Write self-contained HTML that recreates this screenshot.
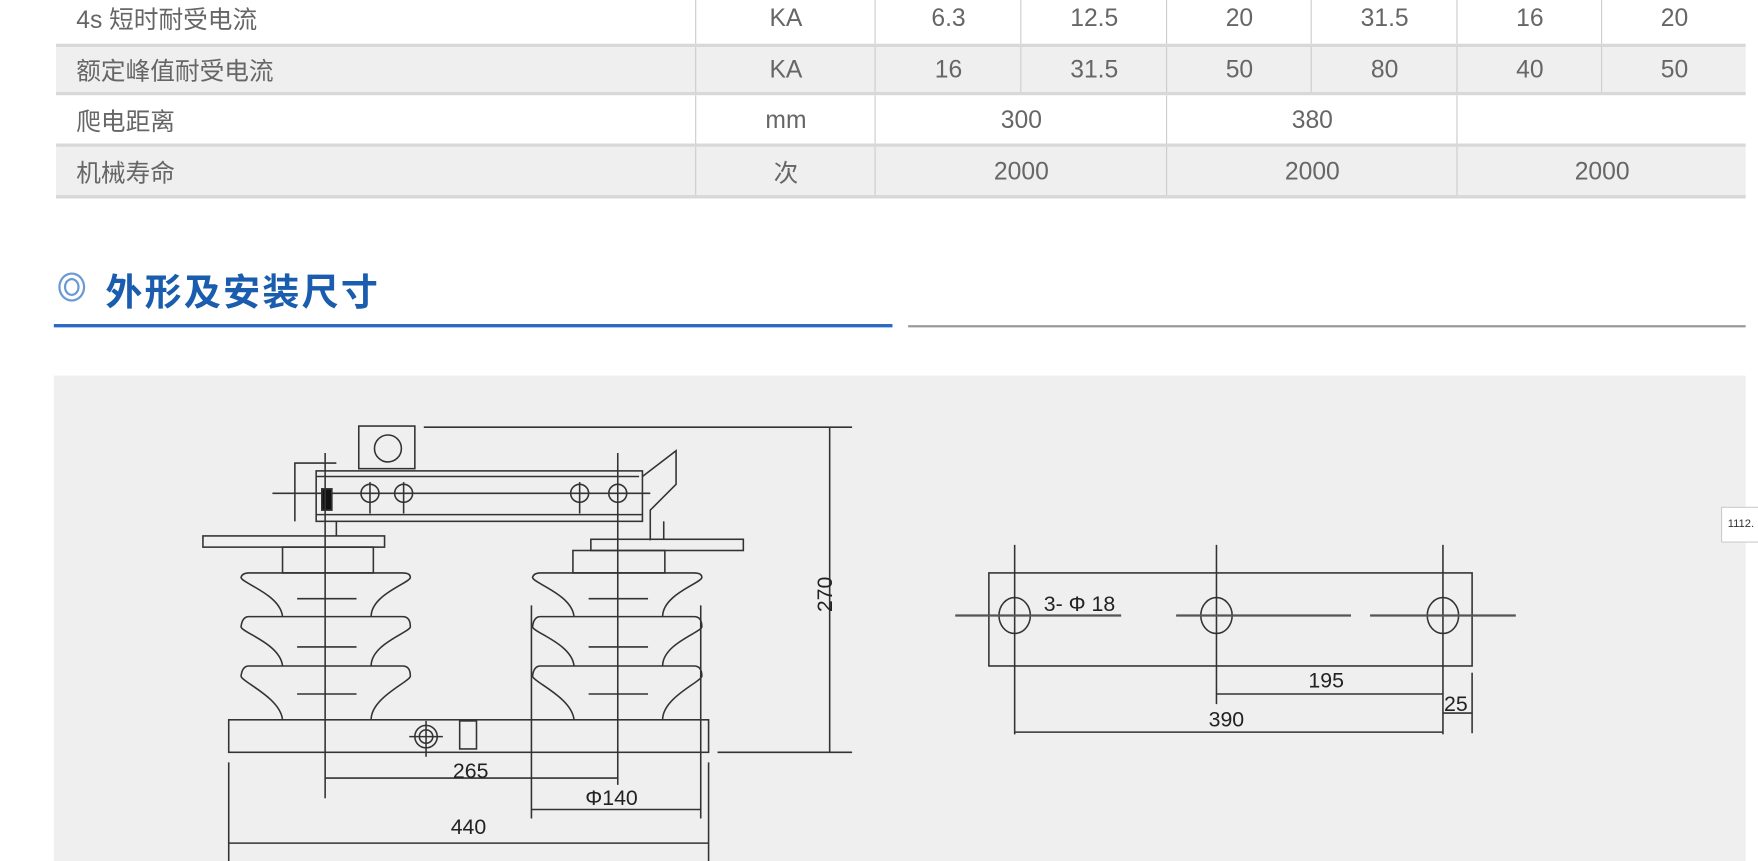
<!DOCTYPE html>
<html><head><meta charset="utf-8"><style>
html,body{margin:0;padding:0;background:#fff;overflow:hidden;width:1758px;height:861px}
#w{position:absolute;left:0;top:0;width:1568px;height:768px;transform:scale(1.12117);transform-origin:0 0;font-family:"Liberation Sans","Noto Sans CJK SC",sans-serif}
.row{position:absolute;left:50px;width:1507px;border-bottom:3px solid #d8d8d8}
.c{position:absolute;top:0;height:100%;border-left:1px solid #ccc;text-align:center;color:#666;font-size:22px;display:flex;align-items:center;justify-content:center}
.c.f{border-left:none;justify-content:flex-start;padding-left:18px;box-sizing:border-box}
</style></head><body><div id="w">
<div class="row" style="top:-8px;height:47px;background:#fff">
<div class="c f" style="left:0;width:570px">4s 短时耐受电流</div>
<div class="c" style="left:570px;width:160px">KA</div><div class="c" style="left:730px;width:130px">6.3</div><div class="c" style="left:860px;width:130px">12.5</div><div class="c" style="left:990px;width:129px">20</div><div class="c" style="left:1119px;width:130px">31.5</div><div class="c" style="left:1249px;width:129px">16</div><div class="c" style="left:1378px;width:129px">20</div></div>
<div class="row" style="top:42px;height:40px;background:#efefef">
<div class="c f" style="left:0;width:570px">额定峰值耐受电流</div>
<div class="c" style="left:570px;width:160px">KA</div><div class="c" style="left:730px;width:130px">16</div><div class="c" style="left:860px;width:130px">31.5</div><div class="c" style="left:990px;width:129px">50</div><div class="c" style="left:1119px;width:130px">80</div><div class="c" style="left:1249px;width:129px">40</div><div class="c" style="left:1378px;width:129px">50</div></div>
<div class="row" style="top:85px;height:43px;background:#fff">
<div class="c f" style="left:0;width:570px">爬电距离</div>
<div class="c" style="left:570px;width:160px">mm</div><div class="c" style="left:730px;width:260px">300</div><div class="c" style="left:990px;width:259px">380</div><div class="c" style="left:1249px;width:258px"></div></div>
<div class="row" style="top:131px;height:43px;background:#efefef">
<div class="c f" style="left:0;width:570px">机械寿命</div>
<div class="c" style="left:570px;width:160px">次</div><div class="c" style="left:730px;width:260px">2000</div><div class="c" style="left:990px;width:259px">2000</div><div class="c" style="left:1249px;width:258px">2000</div></div>

<div style="position:absolute;left:52px;top:243px;width:24px;height:26px;border:2px solid #6a9ad6;border-radius:50%;box-sizing:border-box"></div>
<div style="position:absolute;left:57px;top:248px;width:14px;height:16px;border:2px solid #6a9ad6;border-radius:50%;box-sizing:border-box"></div>
<div style="position:absolute;left:94px;top:234px;font-size:33px;font-weight:bold;color:#1a5cad;letter-spacing:2px">外形及安装尺寸</div>
<div style="position:absolute;left:48px;top:289px;width:748px;height:3px;background:#2a6ac0"></div>
<div style="position:absolute;left:810px;top:290px;width:747px;height:2px;background:#999"></div>

<div style="position:absolute;left:48px;top:335px;width:1509px;height:433px;background:#efefef"></div>
<div style="position:absolute;left:1535px;top:452px;width:40px;height:30px;background:#fff;border:1px solid #ccc;font-size:10px;line-height:30px;padding-left:5px;color:#333">1112.</div>

<svg style="position:absolute;left:0;top:0" width="1568" height="768" viewBox="0 0 1568 768" fill="none" stroke="#333" stroke-width="1.4" font-family="Liberation Sans, sans-serif">
<rect x="320" y="380" width="50" height="38"/><circle cx="346" cy="400" r="12"/>
<line x1="378" y1="381" x2="760" y2="381"/><line x1="740" y1="381" x2="740" y2="671"/><line x1="640" y1="671" x2="760" y2="671"/>
<rect x="282" y="420" width="291" height="45"/><line x1="282" y1="425" x2="570" y2="425"/><line x1="282" y1="459" x2="573" y2="459"/>
<polyline points="263,465 263,413 300,413"/>
<line x1="243" y1="440" x2="580" y2="440"/>
<rect x="287" y="436" width="9" height="19" fill="#111"/>
<circle cx="330" cy="440" r="8"/><circle cx="360" cy="440" r="8"/><circle cx="517" cy="440" r="8"/><circle cx="551" cy="440" r="8"/>
<line x1="330" y1="430" x2="330" y2="458"/><line x1="360" y1="430" x2="360" y2="458"/><line x1="517" y1="430" x2="517" y2="458"/>
<polyline points="573,425 603,402 603,432 580,455 580,482"/>
<polyline points="300,465 300,478"/><polyline points="592,465 592,481"/>
<rect x="181" y="478" width="162" height="10"/><rect x="527" y="481" width="136" height="10"/>
<rect x="252" y="488" width="81" height="23"/><rect x="511" y="491" width="82" height="20"/>
<g id="ins">
<path d="M252,550 C250,530 215,520 215,515 Q216,511 222,511 H359 Q366,511 366,515 C366,520 331,530 331,550"/>
<path d="M252,594 C250,574 215,564 215,559 Q216,550 222,550 H359 Q366,550 366,559 C366,564 331,574 331,594"/>
<path d="M252,642 C250,622 215,608 215,603 Q216,594 222,594 H359 Q366,594 366,603 C366,608 331,622 331,642"/>
<line x1="265" y1="534" x2="318" y2="534"/><line x1="265" y1="577" x2="318" y2="577"/><line x1="265" y1="619" x2="318" y2="619"/>
</g>
<use href="#ins" transform="translate(260,0)"/>
<rect x="204" y="642" width="428" height="29"/>
<circle cx="380" cy="657" r="10"/><circle cx="380" cy="657" r="6"/><line x1="365" y1="657" x2="395" y2="657"/><line x1="380" y1="643" x2="380" y2="675"/>
<rect x="410" y="643" width="15" height="25"/>
<line x1="290" y1="404" x2="290" y2="712"/><line x1="551" y1="404" x2="551" y2="700"/>
<line x1="290" y1="694" x2="551" y2="694"/>
<line x1="474" y1="540" x2="474" y2="730"/><line x1="625" y1="540" x2="625" y2="730"/><line x1="474" y1="722" x2="625" y2="722"/>
<line x1="204" y1="680" x2="204" y2="768"/><line x1="632" y1="680" x2="632" y2="768"/><line x1="204" y1="752" x2="632" y2="752"/>
<g fill="#222" stroke="none" font-size="19">
<text x="404" y="694">265</text><text x="522" y="718">Φ140</text><text x="402" y="744">440</text>
<text transform="translate(742,546) rotate(-90)">270</text>
<text x="931" y="545">3- Φ 18</text><text x="1167" y="613">195</text><text x="1288" y="634">25</text><text x="1078" y="648">390</text>
</g>
<rect x="882" y="511" width="431" height="83"/>
<ellipse cx="905" cy="549" rx="14" ry="16"/><ellipse cx="1085" cy="549" rx="14" ry="16"/><ellipse cx="1287" cy="549" rx="14" ry="16"/>
<line x1="905" y1="486" x2="905" y2="655"/><line x1="1085" y1="486" x2="1085" y2="628"/><line x1="1287" y1="486" x2="1287" y2="655"/><line x1="1313" y1="600" x2="1313" y2="654"/>
<g stroke="#555" stroke-width="2"><line x1="852" y1="549" x2="1000" y2="549"/><line x1="1049" y1="549" x2="1205" y2="549"/><line x1="1222" y1="549" x2="1352" y2="549"/></g>
<line x1="1085" y1="619" x2="1287" y2="619"/><line x1="1287" y1="636" x2="1313" y2="636"/><line x1="905" y1="653" x2="1287" y2="653"/>
</svg>
</div></body></html>
